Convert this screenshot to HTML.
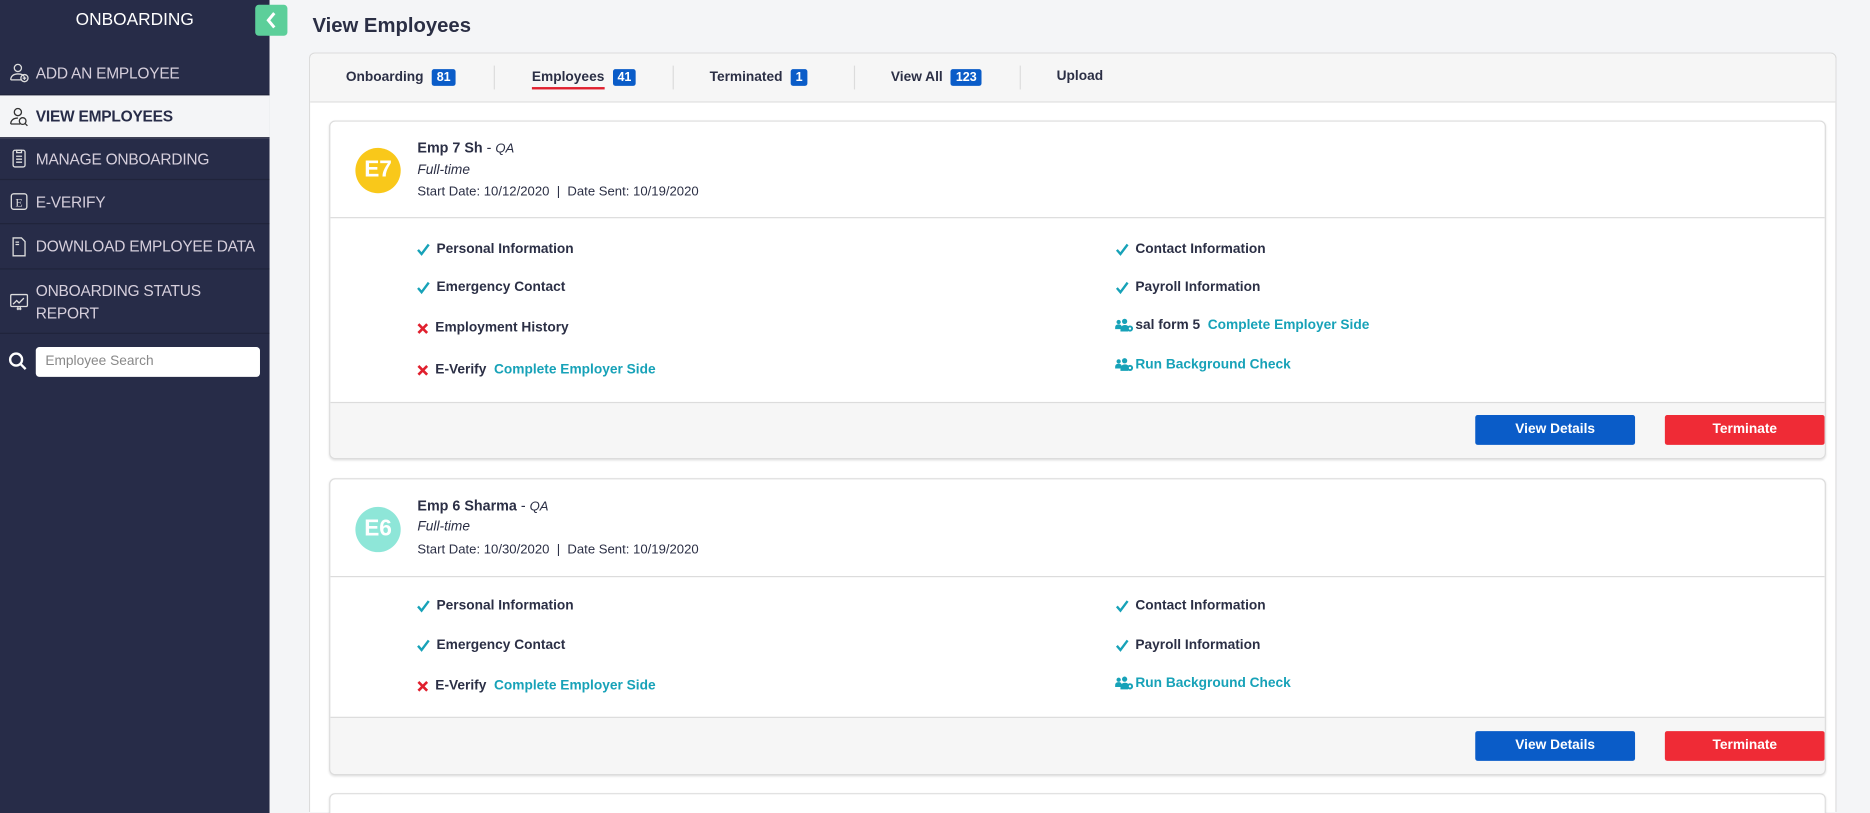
<!DOCTYPE html>
<html><head><meta charset="utf-8"><style>
*{box-sizing:border-box;margin:0;padding:0}
html,body{width:1870px;height:813px;overflow:hidden;background:#f4f5f7;font-family:"Liberation Sans",sans-serif}
#w{position:absolute;left:0;top:0;width:1568px;height:681.7px;overflow:hidden;transform:scale(1.19260);transform-origin:0 0}
.a{position:absolute;white-space:nowrap}
#sb{position:absolute;left:0;top:0;width:226px;height:681.7px;background:#272c48}
.mi{position:absolute;left:0;width:226px;color:#d6cfdc;font-size:13px;border-bottom:1px solid #20243b;display:flex;align-items:center}
.mi svg{position:absolute;left:7px}
.mi span{position:absolute;left:30px;letter-spacing:-.2px}
.tab{position:absolute;top:58px;font-size:11.5px;font-weight:bold;color:#2b2f45}
.bd{display:inline-block;background:#0a5cc8;color:#fff;font-size:10.5px;padding:1px 4px;border-radius:2px;margin-left:7px}
.sep{position:absolute;top:55px;width:1px;height:20px;background:#dcdcdc}
.card{position:absolute;left:276px;width:1255px;background:#fff;border:1px solid #dcdcdc;border-radius:5px;box-shadow:0 1px 2px rgba(0,0,0,.12);overflow:hidden}
.av{position:absolute;left:21px;width:38px;height:38px;border-radius:50%;color:#fff;font-size:19px;font-weight:bold;text-align:center;line-height:38px}
.nm{position:absolute;left:73px;font-size:12px;color:#2b2f45}
.it{position:absolute;font-size:11.5px;font-weight:bold;color:#2b2f45;display:flex;align-items:center}
.it svg{margin-right:5px}
.lk{color:#17a2b8}
.ft{position:absolute;left:0;width:100%;background:#f6f6f6;border-top:1px solid #dcdcdc}
.btn{position:absolute;width:134px;height:25px;color:#fff;font-size:11.5px;font-weight:bold;text-align:center;line-height:25px;border-radius:2px}
</style></head><body><div id="w">
<svg width="0" height="0" style="position:absolute"><defs>
<symbol id="ck" viewBox="0 0 12 12"><path d="M1.5 6.5l3 3.5 6-8" fill="none" stroke="#17a2b8" stroke-width="2"/></symbol>
<symbol id="xx" viewBox="0 0 12 12"><path d="M2 2l8 8M10 2l-8 8" fill="none" stroke="#e0202e" stroke-width="2.4"/></symbol>
<symbol id="pp" viewBox="0 0 16 12" fill="#17a2b8"><circle cx="3" cy="3" r="1.8"/><circle cx="8" cy="2.5" r="2.2"/><path d="M0 8c0-2 1-3 3-3s2.5 1 2.5 2L5 9H0zM4.5 10c0-3 1.5-4.5 3.5-4.5S11 6 11 7v4H4.5z"/><circle cx="12.5" cy="8.5" r="2.6"/><circle cx="12.5" cy="8.5" r="1" fill="#fff"/></symbol>
</defs></svg>
<div id="sb">
<div class="a" style="left:0;width:226px;top:9px;text-align:center;color:#fff;font-size:14.5px">ONBOARDING</div>
<div class="mi" style="top:43px;height:37px"><svg width="18" height="18" viewBox="0 0 18 18" fill="none" stroke="#ddd" stroke-width="1.1"><circle cx="8" cy="5" r="3"/><path d="M2 15c0-3 2-5 6-5s4 1 5 2M2 15h9"/><circle cx="13.5" cy="13.5" r="3"/><path d="M13.5 12v3M12 13.5h3"/></svg><span>ADD AN EMPLOYEE</span></div>
<div class="mi" style="top:80px;height:36px;background:#f4f5f7;color:#272c48;font-weight:bold"><svg width="18" height="18" viewBox="0 0 18 18" fill="none" stroke="#333" stroke-width="1.1"><circle cx="8" cy="5" r="3"/><path d="M2 15c0-3 2-5 6-5M2 15h8"/><circle cx="12" cy="12.5" r="2.8"/><path d="M14 14.5l2 2"/></svg><span>VIEW EMPLOYEES</span></div>
<div class="mi" style="top:116px;height:35px"><svg width="18" height="18" viewBox="0 0 18 18" fill="none" stroke="#ddd" stroke-width="1.1"><rect x="4" y="2" width="10" height="14" rx="1.5"/><path d="M7 2h4v2H7zM6.5 7h5M6.5 9.5h5M6.5 12h5"/></svg><span>MANAGE ONBOARDING</span></div>
<div class="mi" style="top:151px;height:37px"><svg width="18" height="18" viewBox="0 0 18 18" fill="none" stroke="#ddd" stroke-width="1.1"><rect x="2.5" y="2.5" width="13" height="13" rx="2"/><text x="9" y="13" font-size="10" text-anchor="middle" fill="#ddd" stroke="none" font-family="Liberation Serif">E</text></svg><span>E-VERIFY</span></div>
<div class="mi" style="top:188px;height:38px"><svg width="18" height="18" viewBox="0 0 18 18" fill="none" stroke="#ddd" stroke-width="1.1"><path d="M4 1.5h7l3 3v12H4z"/><path d="M6 5h3M6 7h3"/></svg><span>DOWNLOAD EMPLOYEE DATA</span></div>
<div class="mi" style="top:226px;height:54px"><svg width="18" height="18" viewBox="0 0 18 18" fill="none" stroke="#ddd" stroke-width="1.1"><rect x="2" y="3" width="14" height="10" rx="1"/><path d="M4 11l3-3 2 2 4-4M7 15h4M8 13v3M10 13v3"/></svg><span style="line-height:19px;top:8px">ONBOARDING STATUS<br>REPORT</span></div>
<svg class="a" style="left:7px;top:295px" width="16" height="16" viewBox="0 0 16 16" fill="none" stroke="#fff" stroke-width="2"><circle cx="6.5" cy="6.5" r="5"/><path d="M10.5 10.5l4 4"/></svg>
<div class="a" style="left:30px;top:291px;width:188px;height:25px;background:#fff;border-radius:3px;font-size:11.5px;color:#888;padding:6px 8px">Employee Search</div>
</div>
<div class="a" style="left:214px;top:4px;width:27px;height:26px;background:#5ccf9a;border-radius:3px"><svg width="27" height="26" viewBox="0 0 27 26"><path d="M16 7l-5 6 5 6" stroke="#fff" stroke-width="2.5" fill="none"/></svg></div>
<div class="a" style="left:262px;top:12px;font-size:17px;font-weight:bold;color:#2b2f45">View Employees</div>
<div class="a" style="left:259px;top:44px;width:1281px;height:637px;background:#fff;border:1px solid #dcdcdc;border-bottom:none;border-radius:5px 5px 0 0"></div>
<div class="a" style="left:260px;top:45px;width:1279px;height:41px;background:#f6f6f6;border-bottom:1px solid #dcdcdc;border-radius:5px 5px 0 0"></div>
<div class="tab" style="left:290px">Onboarding<span class="bd">81</span></div>
<div class="sep" style="left:414px"></div>
<div class="tab" style="left:446px"><span style="border-bottom:2px solid #e0202e;padding-bottom:2px">Employees</span><span class="bd">41</span></div>
<div class="sep" style="left:564px"></div>
<div class="tab" style="left:595px">Terminated<span class="bd">1</span></div>
<div class="sep" style="left:716px"></div>
<div class="tab" style="left:747px">View All<span class="bd">123</span></div>
<div class="sep" style="left:855px"></div>
<div class="tab" style="left:886px">Upload</div>

<div class="card" style="top:101px;height:284px">
<div class="av" style="top:22px;background:#f9c81a">E7</div>
<div class="nm" style="top:15px"><b>Emp 7 Sh</b> - <i style="font-size:11px">QA</i></div>
<div class="nm" style="top:35px;font-size:11.5px"><i>Full-time</i></div>
<div class="nm" style="top:53px;font-size:11px">Start Date: 10/12/2020 &nbsp;|&nbsp; Date Sent: 10/19/2020</div>
<div class="a" style="left:0;top:80px;width:100%;height:1px;background:#dcdcdc"></div>
<div class="it" style="left:72px;top:101px"><svg width="12" height="12"><use href="#ck"/></svg>Personal Information</div>
<div class="it" style="left:72px;top:133px"><svg width="12" height="12"><use href="#ck"/></svg>Emergency Contact</div>
<div class="it" style="left:72px;top:167px"><svg width="11" height="11"><use href="#xx"/></svg>Employment History</div>
<div class="it" style="left:72px;top:202px"><svg width="11" height="11"><use href="#xx"/></svg>E-Verify &nbsp;<span class="lk">Complete Employer Side</span></div>
<div class="it" style="left:658px;top:101px"><svg width="12" height="12"><use href="#ck"/></svg>Contact Information</div>
<div class="it" style="left:658px;top:133px"><svg width="12" height="12"><use href="#ck"/></svg>Payroll Information</div>
<div class="it" style="left:658px;top:165px"><svg width="16" height="12" style="margin-right:1px"><use href="#pp"/></svg>sal form 5 &nbsp;<span class="lk">Complete Employer Side</span></div>
<div class="it lk" style="left:658px;top:198px"><svg width="16" height="12" style="margin-right:1px"><use href="#pp"/></svg>Run Background Check</div>
<div class="ft" style="top:235px;height:49px"></div>
<div class="btn" style="left:960px;top:246px;background:#0a5cc8">View Details</div>
<div class="btn" style="left:1119px;top:246px;background:#ef2b36">Terminate</div>
</div>

<div class="card" style="top:401px;height:249px">
<div class="av" style="top:23px;background:#8ee6d8">E6</div>
<div class="nm" style="top:15px"><b>Emp 6 Sharma</b> - <i style="font-size:11px">QA</i></div>
<div class="nm" style="top:34px;font-size:11.5px"><i>Full-time</i></div>
<div class="nm" style="top:53px;font-size:11px">Start Date: 10/30/2020 &nbsp;|&nbsp; Date Sent: 10/19/2020</div>
<div class="a" style="left:0;top:81px;width:100%;height:1px;background:#dcdcdc"></div>
<div class="it" style="left:72px;top:100px"><svg width="12" height="12"><use href="#ck"/></svg>Personal Information</div>
<div class="it" style="left:72px;top:133px"><svg width="12" height="12"><use href="#ck"/></svg>Emergency Contact</div>
<div class="it" style="left:72px;top:167px"><svg width="11" height="11"><use href="#xx"/></svg>E-Verify &nbsp;<span class="lk">Complete Employer Side</span></div>
<div class="it" style="left:658px;top:100px"><svg width="12" height="12"><use href="#ck"/></svg>Contact Information</div>
<div class="it" style="left:658px;top:133px"><svg width="12" height="12"><use href="#ck"/></svg>Payroll Information</div>
<div class="it lk" style="left:658px;top:165px"><svg width="16" height="12" style="margin-right:1px"><use href="#pp"/></svg>Run Background Check</div>
<div class="ft" style="top:199px;height:50px"></div>
<div class="btn" style="left:960px;top:211px;background:#0a5cc8">View Details</div>
<div class="btn" style="left:1119px;top:211px;background:#ef2b36">Terminate</div>
</div>

<div class="card" style="top:665px;height:17px;border-bottom:none;border-radius:5px 5px 0 0"></div>
</div></body></html>
